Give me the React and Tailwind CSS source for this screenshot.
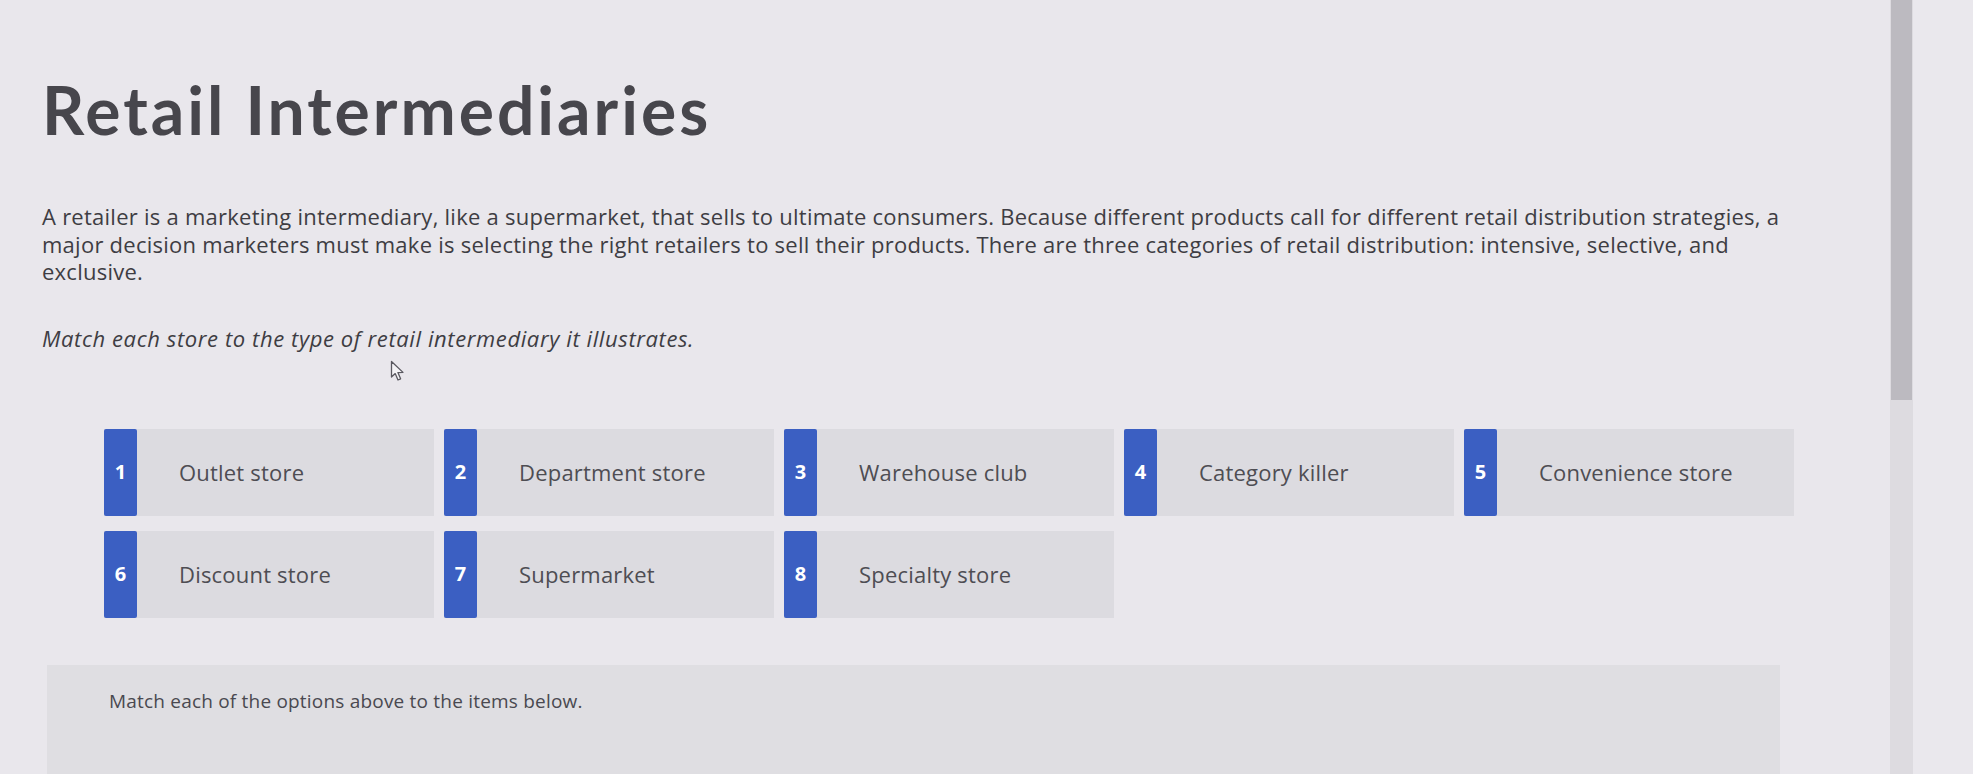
import React from "react";

const items = [
  ["1", "Outlet store"],
  ["2", "Department store"],
  ["3", "Warehouse club"],
  ["4", "Category killer"],
  ["5", "Convenience store"],
  ["6", "Discount store"],
  ["7", "Supermarket"],
  ["8", "Specialty store"],
];

function Card({ n, label }) {
  return (
    <div className="flex h-[87px] bg-[#dcdbe0]">
      <div className="w-[33px] shrink-0 bg-[#3b5fc2] rounded-[2px] flex items-center justify-center text-white font-bold text-[20px]">
        {n}
      </div>
      <div className="flex items-center pl-[42px] text-[22px] tracking-[0.2px] text-[#4e4d53]">{label}</div>
    </div>
  );
}

export default function App() {
  return (
    <div
      className="w-[1973px] h-[774px] overflow-hidden flex bg-[#e9e7ec]"
      style={{ fontFamily: "'Open Sans', Lato, sans-serif" }}
    >
      <div className="w-[1890px] shrink-0 relative pt-[77px]">
        <h1
          className="pl-[42px] text-[66px] leading-none font-bold text-[#47464c] tracking-[3px]"
          style={{ fontFamily: "Lato, 'Open Sans', sans-serif" }}
        >
          Retail Intermediaries
        </h1>
        <p className="pl-[42px] mt-[60px] w-[1860px] text-[22px] leading-[27.5px] tracking-[0.25px] text-[#3e3d43]">
          A retailer is a marketing intermediary, like a supermarket, that sells to ultimate consumers. Because different products call for different retail distribution strategies, a
          <br />
          major decision marketers must make is selecting the right retailers to sell their products. There are three categories of retail distribution: intensive, selective, and
          <br />
          exclusive.
        </p>
        <p className="pl-[42px] mt-[38px] text-[22px] leading-[28px] italic tracking-[0.6px] text-[#3e3d43]">
          Match each store to the type of retail intermediary it illustrates.
        </p>
        <svg
          className="absolute left-[390px] top-[360px]"
          width="16"
          height="22"
          viewBox="0 0 16 22"
        >
          <path
            d="M1.5 1.5 L1.5 17 L5.2 13.6 L8 20 L10.6 18.8 L7.9 12.6 L13 12.4 Z"
            fill="#f4f3f6"
            stroke="#5a5960"
            strokeWidth="1.3"
            strokeLinejoin="round"
          />
        </svg>
        <div className="ml-[104px] mt-[77px] w-[1690px] grid grid-cols-5 gap-x-[10px] gap-y-[15px]">
          {items.map(([n, l]) => (
            <Card key={n} n={n} label={l} />
          ))}
        </div>
        <div className="ml-[47px] mt-[47px] w-[1733px] h-[120px] bg-[#dfdee2] pt-[25px] pl-[62px]">
          <p className="text-[19px] leading-[22px] tracking-[0.2px] text-[#4a4950]">
            Match each of the options above to the items below.
          </p>
        </div>
      </div>
      <div className="w-[23px] shrink-0 bg-[#dddbe0] flex flex-col">
        <div className="h-[400px] bg-[#bcbac0] mx-[1px]"></div>
      </div>
      <div className="flex-1 bg-[#eae8ed]"></div>
    </div>
  );
}
